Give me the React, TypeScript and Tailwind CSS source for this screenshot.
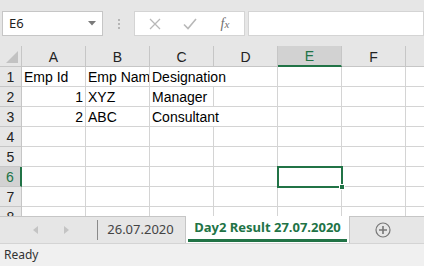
import React from "react";

const cols = ["A", "B", "C", "D", "E", "F", "G"];
type Cell = { t: string; r?: boolean; over?: boolean; clip?: boolean };
const rows: Cell[][] = [
  [{ t: "Emp Id" }, { t: "Emp Name", clip: true }, { t: "Designation", over: true }],
  [{ t: "1", r: true }, { t: "XYZ" }, { t: "Manager" }],
  [{ t: "2", r: true }, { t: "ABC" }, { t: "Consultant", over: true }],
  [], [], [], [], [],
];

export default function App() {
  const cellFont = { fontFamily: '"Liberation Sans", Arial, sans-serif' };
  return (
    <div className="w-[424px] h-[266px] overflow-hidden bg-white flex flex-col" style={{ fontFamily: '"Noto Sans", "Liberation Sans", sans-serif' }}>
      {/* formula bar */}
      <div className="h-[46px] shrink-0 bg-[#e6e6e6] flex items-start pt-[11px]">
        <div className="ml-[2px] w-[101px] h-[25px] bg-white border border-[#c6c6c6] flex items-center justify-between pl-[6px] pr-[6px]">
          <span className="text-[13px] text-[#222]">E6</span>
          <svg width="8" height="5" viewBox="0 0 8 5"><path d="M0 0h8L4 4.5z" fill="#7a7a7a" /></svg>
        </div>
        <div className="w-[31px] h-[25px] flex items-center justify-center">
          <div className="flex flex-col gap-[2px]">
            <div className="w-[2px] h-[2px] bg-[#b5b5b5]" />
            <div className="w-[2px] h-[2px] bg-[#b5b5b5]" />
            <div className="w-[2px] h-[2px] bg-[#b5b5b5]" />
          </div>
        </div>
        <div className="w-[111px] h-[25px] bg-white border border-[#d4d4d4] flex items-center">
          <div className="w-[36px] flex justify-center ml-[2px]">
            <svg width="12" height="12" viewBox="0 0 12 12"><path d="M1 1L11 11M11 1L1 11" stroke="#b8b8b8" strokeWidth="1.3" /></svg>
          </div>
          <div className="w-[34px] flex justify-center">
            <svg width="14" height="12" viewBox="0 0 14 12"><path d="M1 6.5L5 10.5L13 1" stroke="#b8b8b8" strokeWidth="1.6" fill="none" /></svg>
          </div>
          <div className="w-[36px] flex justify-center">
            <span className="text-[14px] italic text-[#6f6f6f]" style={{ fontFamily: '"Liberation Serif", serif' }}>f<span className="text-[11px]">x</span></span>
          </div>
        </div>
        <div className="ml-[3px] flex-1 h-[25px] bg-white border border-[#d4d4d4]" />
      </div>

      {/* grid */}
      <div className="h-[170px] shrink-0 overflow-hidden relative" style={cellFont}>
        <div className="grid grid-cols-[22px_repeat(7,64px)] grid-rows-[21px]">
          <div className="bg-[#e6e6e6] border-r border-b border-[#c6c6c6] relative">
            <svg className="absolute right-[3px] bottom-[3px]" width="12" height="12" viewBox="0 0 12 12"><path d="M12 0V12H0z" fill="#c2c2c2" /></svg>
          </div>
          {cols.map((c) => (
            <div
              key={c}
              className={
                c === "E"
                  ? "bg-[#d2d2d2] border-r border-[#c6c6c6] border-b-2 border-b-[#217346] flex items-center justify-center pt-[2px] text-[14px] text-[#217346]"
                  : "bg-[#e6e6e6] border-r border-b border-[#c6c6c6] flex items-center justify-center pt-[2px] text-[14px] text-[#222]"
              }
            >
              {c}
            </div>
          ))}
          {rows.map((r, i) => (
            <React.Fragment key={i}>
              <div
                className={
                  i === 5
                    ? "h-[20px] bg-[#d2d2d2] border-r-2 border-r-[#217346] border-b border-[#c6c6c6] flex items-end justify-center leading-[17px] text-[14px] text-[#217346]"
                    : "h-[20px] bg-[#e6e6e6] border-r border-b border-[#c6c6c6] flex items-end justify-center leading-[17px] text-[14px] text-[#222]"
                }
              >
                {i + 1}
              </div>
              {cols.map((c, j) => {
                const cell = r[j];
                return (
                  <div
                    key={c}
                    className={
                      "h-[20px] border-r border-b border-[#d4d4d4] text-[14px] leading-[17px] text-black whitespace-nowrap flex items-end " +
                      (cell?.r ? "justify-end pr-[2px] " : "justify-start pl-[2px] ") +
                      (cell?.clip ? "overflow-hidden " : "") +
                      (cell?.over ? "relative z-[2] " : "")
                    }
                  >
                    {cell?.over ? (
                      <span className="bg-white h-[19px] flex items-end pr-[2px]">{cell.t}</span>
                    ) : (
                      cell?.t
                    )}
                  </div>
                );
              })}
            </React.Fragment>
          ))}
        </div>
        {/* selected cell */}
        <div className="absolute left-[277px] top-[120px] w-[66px] h-[22px] border-2 border-[#217346] z-10">
          <div className="absolute -right-[4px] -bottom-[4px] w-[6px] h-[6px] bg-[#217346] border border-white" />
        </div>
      </div>

      {/* tabs */}
      <div className="h-[27px] shrink-0 flex bg-[#e6e6e6]" style={{ fontFamily: '"Noto Sans", sans-serif' }}>
        <div className="w-[185px] border-t border-[#c6c6c6] flex items-center">
          <div className="w-[97px] flex items-center justify-center gap-[26px] pl-[4px]">
            <svg width="5" height="8" viewBox="0 0 5 8"><path d="M5 0V8L0 4z" fill="#c4c4c4" /></svg>
            <svg width="5" height="8" viewBox="0 0 5 8"><path d="M0 0V8L5 4z" fill="#c4c4c4" /></svg>
          </div>
          <div className="w-px h-[20px] bg-[#8a8a8a]" />
          <div className="flex-1 flex items-center justify-center text-[13px] text-[#444] pr-[2px]">26.07.2020</div>
        </div>
        <div className="w-[165px] bg-white border-l border-r border-[#c6c6c6] flex flex-col">
          <div className="flex-1 flex items-center justify-center text-[13px] font-bold text-[#217346]">Day2 Result 27.07.2020</div>
          <div className="h-[3px] bg-[#217346] mx-[2px] mb-[1px]" />
        </div>
        <div className="flex-1 border-t border-[#c6c6c6] flex items-center">
          <div className="w-[64px] flex justify-center ml-[1px]">
            <svg width="16" height="16" viewBox="0 0 16 16"><circle cx="8" cy="8" r="7" stroke="#777" strokeWidth="1.2" fill="none" /><path d="M8 4V12M4 8H12" stroke="#777" strokeWidth="1.6" /></svg>
          </div>
        </div>
      </div>
      <div className="h-px bg-[#d4d4d4]" />
      <div className="flex-1 bg-[#f0f0f0] flex items-center pl-[4px] text-[12px] text-[#333]" style={{ fontFamily: '"Noto Sans", sans-serif' }}>Ready</div>
    </div>
  );
}
